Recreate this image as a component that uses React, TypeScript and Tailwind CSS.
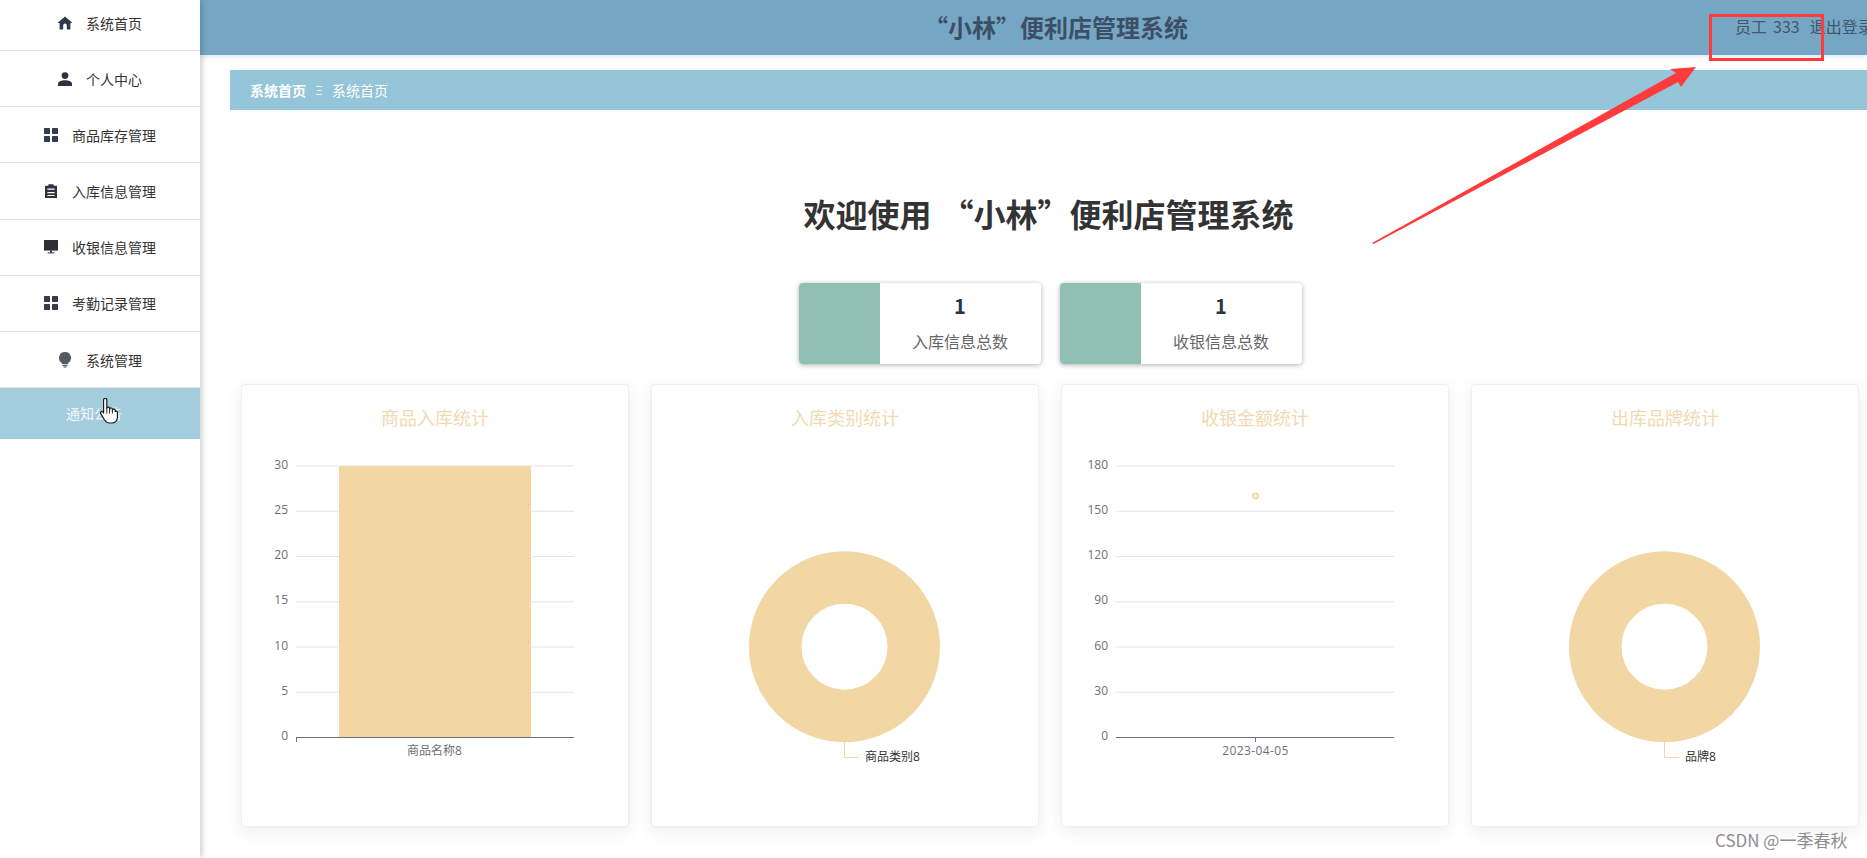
import type { ReactNode } from "react";

const menus: { label: string; icon: ReactNode }[] = [
  { label: "系统首页", icon: <HomeIcon /> },
  { label: "个人中心", icon: <UserIcon /> },
  { label: "商品库存管理", icon: <GridIcon /> },
  { label: "入库信息管理", icon: <ClipboardIcon /> },
  { label: "收银信息管理", icon: <MonitorIcon /> },
  { label: "考勤记录管理", icon: <GridIcon /> },
  { label: "系统管理", icon: <BulbIcon /> },
];

function HomeIcon() {
  return (
    <svg viewBox="0 0 14 14" className="w-[14px] h-[14px] text-[#2d3a4a]" fill="currentColor">
      <path d="M7 .6 14 6.6V7H12.4V13.4H8.8V9.2A1.8 1.8 0 0 0 5.2 9.2V13.4H1.6V7H0V6.6Z" />
    </svg>
  );
}

function UserIcon() {
  return (
    <svg viewBox="0 0 14 14" className="w-[14px] h-[14px] text-[#2d3440]" fill="currentColor">
      <circle cx="7" cy="3.6" r="3.4" />
      <path d="M0 14V11.6C0 9.4 4 8.2 7 8.2S14 9.4 14 11.6V14Z" />
    </svg>
  );
}

function GridIcon() {
  return (
    <svg viewBox="0 0 14 14" className="w-[14px] h-[14px] text-[#333c48]" fill="currentColor">
      <rect x="0" y="0" width="6" height="6" rx=".5" />
      <rect x="8" y="0" width="6" height="6" rx=".5" />
      <rect x="0" y="8" width="6" height="6" rx=".5" />
      <rect x="8" y="8" width="6" height="6" rx=".5" />
    </svg>
  );
}

function ClipboardIcon() {
  return (
    <svg viewBox="0 0 14 14" className="w-[14px] h-[14px] text-[#2d3440]" fill="currentColor">
      <path
        fillRule="evenodd"
        d="M1 1.8H4.4V.2H9.6V1.8H13V14H1ZM3.4 4.6V5.8H10.6V4.6ZM3.4 8V9.2H10.6V8ZM3.4 11V12H10.6V11Z"
      />
    </svg>
  );
}

function MonitorIcon() {
  return (
    <svg viewBox="0 0 14 14" className="w-[14px] h-[14px] text-[#2d3136]" fill="currentColor">
      <rect x="0" y="0" width="14" height="10.6" />
      <rect x="6" y="10.6" width="2" height="2" />
      <rect x="3.6" y="12.4" width="6.8" height="1" />
    </svg>
  );
}

function BulbIcon() {
  return (
    <svg viewBox="0 0 14 16" className="w-[14px] h-4 text-[#555b63]" fill="currentColor">
      <path d="M7 0A6 6 0 0 1 10 11.2V12.2H4V11.2A6 6 0 0 1 7 0Z" />
      <rect x="4.6" y="13" width="4.8" height="1.2" />
      <rect x="5.6" y="14.6" width="2.8" height="1" />
    </svg>
  );
}

function HandCursor() {
  return (
    <svg viewBox="0 0 18 26" className="absolute z-20 left-[100px] top-[398px] w-[18px] h-[26px]">
      <path
        d="M3.6 2A1.6 1.6 0 0 1 6.8 2V10.4A1.4 1.4 0 0 1 9.6 10.6V11.2A1.4 1.4 0 0 1 12.4 11.6V12.2A1.4 1.4 0 0 1 15.2 12.8V13.6A1.3 1.3 0 0 1 17.4 14.4V19C17.4 22.6 15 25 12 25H9.4C7 25 5.6 23.8 4.4 21.8L.8 15.6C0 14 1.8 12.8 3 14L3.6 15Z"
        fill="#fff"
        stroke="#1a1a1a"
        strokeWidth="1.2"
        strokeLinejoin="round"
      />
      <path d="M6.8 10.4V15.6M9.6 11V15.6M12.4 12V15.6" stroke="#1a1a1a" strokeWidth=".9" fill="none" />
    </svg>
  );
}

const Sidebar = () => (
  <aside className="w-[200px] shrink-0 bg-white shadow-[2px_0_6px_rgba(0,0,0,0.2)] z-10 text-[14px] text-[#333]">
    {menus.map((m, i) => (
      <div
        key={i}
        className={`flex items-center justify-center gap-[14px] border-b border-[#dddfe1] ${
          i === 0 ? "h-[51px] pb-[5px]" : "h-[56.2px]"
        }`}
      >
        {m.icon}
        <span className="leading-none">{m.label}</span>
      </div>
    ))}
    <div className="h-[50.5px] bg-[#a3cddd] text-[#f3f9fb] flex items-center justify-center pr-3">通知公告</div>
  </aside>
);

const StatCard = ({ label }: { label: string }) => (
  <div className="w-[242px] h-[81px] flex rounded-[4px] bg-white overflow-hidden shadow-[0_1px_5px_rgba(0,0,0,0.32)]">
    <div className="w-[81px] bg-[#8fc0b2]" />
    <div className="flex-1 flex flex-col items-center">
      <div className="mt-[9px] text-[20px] font-bold leading-[28px] text-[#2c3540]">1</div>
      <div className="mt-[10px] text-[16px] leading-[22px] text-[#666]">{label}</div>
    </div>
  </div>
);

const ticksA = ["30", "25", "20", "15", "10", "5", "0"];
const ticksB = ["180", "150", "120", "90", "60", "30", "0"];

const Axis = ({ ticks }: { ticks: string[] }) => (
  <>
    {ticks.map((t, i) => {
      const y = 15 + i * 45.25;
      return (
        <g key={t}>
          {i < 6 && <line x1="54" x2="332" y1={y} y2={y} stroke="#e4e3ee" strokeWidth="1" />}
          <text x="46" y={y + 2.5} textAnchor="end" fontSize="12" fill="#6e7079">
            {t}
          </text>
        </g>
      );
    })}
  </>
);

const chartClass = "block w-[386px] h-[376px] font-['Open_Sans','Noto_Sans_CJK_SC',sans-serif]";

const BarChart = () => (
  <svg viewBox="0 0 386 376" className={chartClass}>
    <Axis ticks={ticksA} />
    <rect x="97" y="15" width="192" height="271.5" fill="#f2d6a3" />
    <line x1="54" x2="332" y1="286.5" y2="286.5" stroke="#6e7079" />
    <line x1="54.5" x2="54.5" y1="286.5" y2="291" stroke="#6e7079" />
    <text x="192.5" y="303.5" textAnchor="middle" fontSize="12" fill="#6e7079">
      商品名称8
    </text>
  </svg>
);

const LineChart = () => (
  <svg viewBox="0 0 386 376" className={chartClass}>
    <Axis ticks={ticksB} />
    <line x1="54" x2="332" y1="286.5" y2="286.5" stroke="#6e7079" />
    <line x1="193.5" x2="193.5" y1="286.5" y2="291" stroke="#6e7079" />
    <circle cx="193.5" cy="45" r="2.4" fill="#fff" stroke="#f2d6a3" strokeWidth="2" />
    <text x="193.5" y="303.5" textAnchor="middle" fontSize="12" letterSpacing=".4" fill="#6e7079">
      2023-04-05
    </text>
  </svg>
);

const DonutChart = ({ label }: { label: string }) => (
  <svg viewBox="0 0 386 376" className={chartClass}>
    <circle cx="192.5" cy="195.7" r="69.25" fill="none" stroke="#f2d6a3" strokeWidth="52.5" />
    <path d="M192.5 291V306.5H207" fill="none" stroke="#f2d6a3" />
    <text x="213" y="309.5" fontSize="12" fill="#333">
      {label}
    </text>
  </svg>
);

const ChartCard = ({ title, children }: { title: string; children: ReactNode }) => (
  <div className="h-[443px] rounded-[4px] bg-white border border-[#eeeef4] shadow-[0_4px_16px_rgba(40,40,80,0.09)]">
    <div className="h-[66px] pb-[2px] flex items-center justify-center text-[18px] text-[#f2dab0]">{title}</div>
    {children}
  </div>
);

export default function App() {
  return (
    <div
      lang="zh-CN"
      className="relative w-[1867px] h-[858px] overflow-hidden flex bg-white font-['Noto_Sans_CJK_SC','Noto_Sans',sans-serif]"
    >
      <Sidebar />
      <main className="flex-1 min-w-0">
        <header className="h-[55px] bg-[#75a7c4] flex overflow-hidden shadow-[0_2px_4px_rgba(117,167,196,0.25)]">
          <div className="flex-1 pl-[177px] text-center text-[24px] leading-[53px] font-bold text-[#3d4f66]">
            “小林”便利店管理系统
          </div>
          <div className="w-[132px] shrink-0 whitespace-nowrap text-[16px] leading-[52px] text-[#43586f]">
            <span className="mr-[6px]">员工</span>
            <span className="mr-[10px]">333</span>
            <span>退出登录</span>
          </div>
        </header>
        <div className="ml-[30px]">
          <div className="mt-[15px] h-[40px] bg-[#94c5d8] flex items-center pl-[20px] text-[14px] text-white">
            <span className="font-bold">系统首页</span>
            <span className="w-[26px] text-center text-[12px] opacity-80">Ξ</span>
            <span>系统首页</span>
          </div>
          <h1 className="mt-[79px] h-[48px] text-center text-[32px] leading-[48px] font-bold text-[#333]">
            欢迎使用<span className="ml-[10px]">“小林”便利店管理系统</span>
          </h1>
          <div className="mt-[46px] pl-[3px] flex justify-center gap-[19px]">
            <StatCard label="入库信息总数" />
            <StatCard label="收银信息总数" />
          </div>
          <div className="mt-[20px] pl-[11px] pr-[8px] grid grid-cols-4 gap-[22px]">
            <ChartCard title="商品入库统计">
              <BarChart />
            </ChartCard>
            <ChartCard title="入库类别统计">
              <DonutChart label="商品类别8" />
            </ChartCard>
            <ChartCard title="收银金额统计">
              <LineChart />
            </ChartCard>
            <ChartCard title="出库品牌统计">
              <DonutChart label="品牌8" />
            </ChartCard>
          </div>
        </div>
      </main>

      {/* annotation drawn over the screenshot */}
      <div className="absolute left-[1709px] top-[14px] w-[115px] h-[47px] border-[3px] border-[#ff3b3b]" />
      <svg viewBox="0 0 1867 858" className="absolute inset-0 w-[1867px] h-[858px] pointer-events-none">
        <polygon points="1372,243 1676,73 1670,69 1696,67 1681,87 1678,82 1373.5,244" fill="#ff3b3b" />
      </svg>
      <HandCursor />
      <div className="absolute left-[1715px] top-[828px] text-[17px] leading-[24px] text-[#8f8f8f]">CSDN @一季春秋</div>
    </div>
  );
}
